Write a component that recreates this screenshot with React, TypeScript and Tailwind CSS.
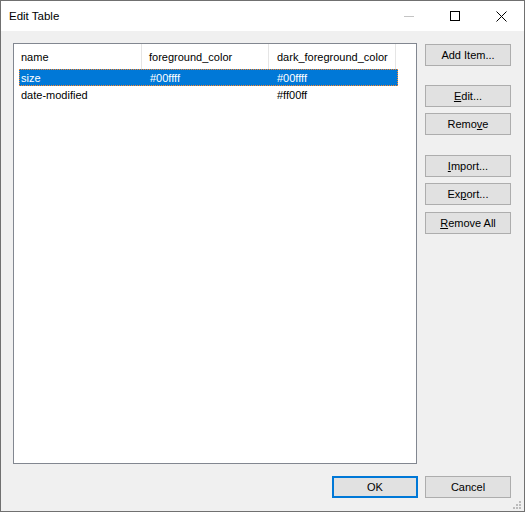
import React from "react";

const font = { fontFamily: '"Liberation Sans", Arial, sans-serif' };

function Btn({ children, className = "" }: { children: React.ReactNode; className?: string }) {
  return (
    <div
      className={
        "w-[86px] h-[22px] flex items-center justify-center pt-[1px] bg-[#e1e1e1] border border-[#adadad] text-[11px] text-black leading-none " +
        className
      }
    >
      {children}
    </div>
  );
}

export default function App() {
  return (
    <div
      className="w-[525px] h-[512px] border border-[#707070] bg-[#f0f0f0] flex flex-col relative select-none"
      style={font}
    >
      {/* title bar */}
      <div className="h-[30px] bg-white flex items-center shrink-0">
        <div className="pl-[8px] pt-[2px] text-[11.5px] text-black flex-1">Edit Table</div>
        <div className="w-[46px] h-full flex items-center justify-center">
          <svg width="10" height="10" viewBox="0 0 10 10">
            <line x1="0" y1="5.5" x2="10" y2="5.5" stroke="#c4c4c4" strokeWidth="1" />
          </svg>
        </div>
        <div className="w-[46px] h-full flex items-center justify-center">
          <svg width="10" height="10" viewBox="0 0 10 10">
            <rect x="0.5" y="0.5" width="9" height="9" fill="none" stroke="#000" strokeWidth="1" />
          </svg>
        </div>
        <div className="w-[46px] h-full flex items-center justify-center">
          <svg width="11" height="11" viewBox="0 0 11 11">
            <path d="M0.5 0.5 L10.5 10.5 M10.5 0.5 L0.5 10.5" stroke="#000" strokeWidth="1" />
          </svg>
        </div>
      </div>

      {/* body */}
      <div className="flex-1 flex flex-col pt-[12px] pl-[12px] pr-[13px] pb-[13px]">
        <div className="flex gap-[8px]">
          {/* list view */}
          <div className="w-[404px] h-[421px] border border-[#828790] bg-white text-[11px] text-black">
            <div className="flex h-[25px]">
              <div className="w-[128px] pl-[7px] pt-[2px] flex items-center border-r border-[#e5e5e5]">name</div>
              <div className="w-[127px] pl-[7px] pt-[2px] flex items-center border-r border-[#e5e5e5]">foreground_color</div>
              <div className="w-[127px] pl-[8px] pt-[2px] flex items-center border-r border-[#e5e5e5]">dark_foreground_color</div>
            </div>
            <div className="ml-[5px] w-[379px] h-[17px] pt-[1px] flex items-center bg-[#0078d7] text-white border border-dotted border-[#ff8728]">
              <div className="w-[123px] pl-[1px]">size</div>
              <div className="w-[127px] pl-[7px]">#00ffff</div>
              <div className="pl-[7px]">#00ffff</div>
            </div>
            <div className="ml-[5px] w-[379px] h-[17px] pt-[2px] flex items-center">
              <div className="w-[124px] pl-[2px]">date-modified</div>
              <div className="w-[127px] pl-[7px]"></div>
              <div className="pl-[7px]">#ff00ff</div>
            </div>
          </div>

          {/* buttons */}
          <div className="flex flex-col pt-[1px]">
            <Btn>Add Item...</Btn>
            <Btn className="mt-[19px]">
              <span><span className="underline">E</span>dit...</span>
            </Btn>
            <Btn className="mt-[6px]">
              <span>Remo<span className="underline">v</span>e</span>
            </Btn>
            <Btn className="mt-[20px]">
              <span><span className="underline">I</span>mport...</span>
            </Btn>
            <Btn className="mt-[6px]">
              <span>Ex<span className="underline">p</span>ort...</span>
            </Btn>
            <Btn className="mt-[7px]">
              <span><span className="underline">R</span>emove All</span>
            </Btn>
          </div>
        </div>

        {/* footer */}
        <div className="mt-[12px] flex justify-end gap-[7px]">
          <div className="w-[86px] h-[22px] flex items-center justify-center pt-[1px] bg-[#e1e1e1] border-2 border-[#0078d7] text-[11px] text-black leading-none">
            OK
          </div>
          <Btn>Cancel</Btn>
        </div>
      </div>

      {/* resize grip */}
      <svg className="absolute right-[3px] bottom-[2px]" width="9" height="9" viewBox="0 0 9 9">
        <rect x="7" y="1" width="2" height="2" fill="#bcbcbc" />
        <rect x="4" y="4" width="2" height="2" fill="#bcbcbc" />
        <rect x="7" y="4" width="2" height="2" fill="#bcbcbc" />
        <rect x="1" y="7" width="2" height="2" fill="#bcbcbc" />
        <rect x="4" y="7" width="2" height="2" fill="#bcbcbc" />
        <rect x="7" y="7" width="2" height="2" fill="#bcbcbc" />
      </svg>
    </div>
  );
}
